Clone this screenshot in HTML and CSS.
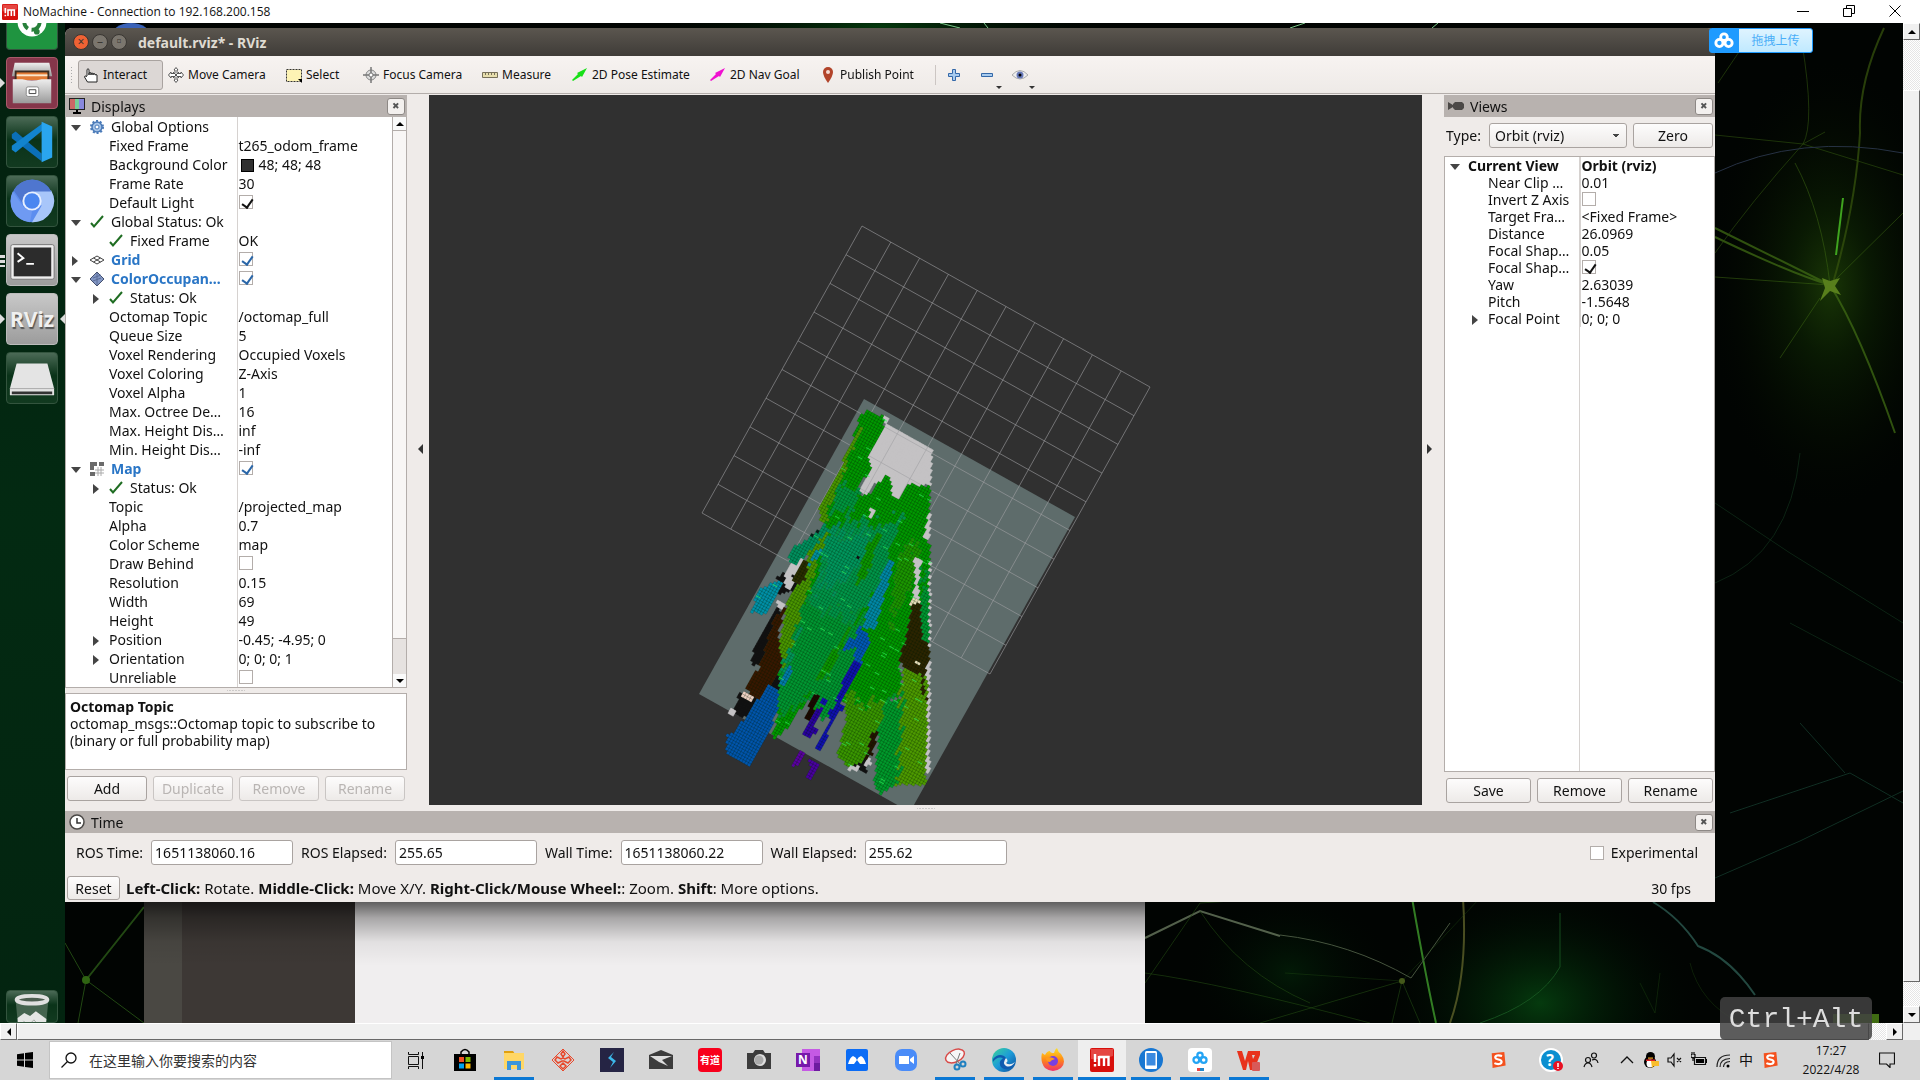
FILE: index.html
```html
<!DOCTYPE html>
<html lang="zh-CN">
<head>
    <meta charset="UTF-8">
    <meta name="viewport" content="width=device-width, initial-scale=1.0">
    <title>NoMachine - Connection to 192.168.200.158</title>
    <link rel="stylesheet" href="styles.css">
</head>
<body>
    <!-- Shared icons -->
    <svg class="defs" aria-hidden="true">
        <symbol id="i-check" viewBox="0 0 14 14"><path d="M1 8 4 11.500 13 1" fill="none" stroke="#1f6d22" stroke-width="2"/></symbol>
        <symbol id="i-nm" viewBox="0 0 24 24"><rect width="24" height="24" rx="2" fill="#d8100c"/><path d="M1 1h22v7q-11 4-22 3z" fill="#ef6a66" opacity=".6"/><path d="M5 6v8M5 16v2.500M9 18V8M9 9h9.500V18M14 9v9" fill="none" stroke="#fff" stroke-width="2.400"/></symbol>
        <symbol id="i-sogou" viewBox="0 0 20 20"><path d="M3 2.500 17 1l1.500 15L4 19Z" fill="#f4511e"/><path d="M14.500 5.500C10 4 6.500 5 7 7.500s7 1.500 7 4.500-5 3-8 1.500" fill="none" stroke="#fff" stroke-width="2.400"/></symbol>
        <symbol id="i-cloud" viewBox="0 0 24 20"><g fill="none" stroke-width="3.400"><circle cx="12" cy="6" r="4"/><circle cx="6.500" cy="13" r="4.300"/><circle cx="17.500" cy="13" r="4.300"/></g></symbol>
        <linearGradient id="g-metal" x2="0" y2="1"><stop stop-color="#eee"/><stop offset="1" stop-color="#9b9b9b"/></linearGradient>
        <linearGradient id="g-edge" x2="1" y2="1"><stop stop-color="#3bd59a"/><stop offset=".5" stop-color="#1c9bd8"/><stop offset="1" stop-color="#0c4a9c"/></linearGradient>
        <linearGradient id="g-fox" x2="0" y2="1"><stop stop-color="#ffe226"/><stop offset=".5" stop-color="#ff8a16"/><stop offset="1" stop-color="#f0306a"/></linearGradient>
    </svg>

    <header class="titlebar">
        <svg class="logo"><use href="#i-nm"/></svg>
        <span class="caption">NoMachine - Connection to 192.168.200.158</span>
        <button class="win-btn" aria-label="Minimize"><svg viewBox="0 0 12 12"><path d="M0 6.500h12"/></svg></button>
        <button class="win-btn" aria-label="Restore"><svg viewBox="0 0 12 12"><path d="M.5 3.500h8v8h-8zM3.500 3V.5h8v8H9"/></svg></button>
        <button class="win-btn" aria-label="Close"><svg viewBox="0 0 12 12"><path d="M.5.5l11 11M11.500.5l-11 11"/></svg></button>
    </header>

    <main class="remote">
        <div class="desktop">
            <svg class="wallpaper" viewBox="0 0 1903 1000" preserveAspectRatio="xMidYMid slice" aria-hidden="true">
                <defs>
                    <radialGradient id="glow"><stop stop-color="#234a08" stop-opacity=".7"/><stop offset=".3" stop-color="#0f2804" stop-opacity=".6"/><stop offset="1" stop-color="#000" stop-opacity="0"/></radialGradient>
                    <radialGradient id="glow2"><stop stop-color="#053a0e"/><stop offset="1" stop-color="#000" stop-opacity="0"/></radialGradient>
                </defs>
                <rect width="1903" height="1000" fill="#010402"/>
                <ellipse cx="1830" cy="262" rx="130" ry="240" fill="url(#glow)"/>
                <ellipse cx="1540" cy="980" rx="170" ry="130" fill="url(#glow2)"/>
                <ellipse cx="1290" cy="950" rx="110" ry="90" fill="url(#glow2)" opacity=".4"/>
                <ellipse cx="880" cy="3" rx="260" ry="30" fill="url(#glow2)"/>
                <g fill="none" stroke="#3f6a14" opacity=".75">
                    <path d="M1884 5Q1858 60 1860 110 1856 180 1833 260" stroke="#35520d" stroke-width="2"/>
                    <path d="M1715 205 1830 262M1715 214Q1790 250 1830 262 1860 310 1895 410" stroke-width="2"/>
                    <path d="M1715 254 1830 262M1830 262 1903 190M1830 262Q1822 190 1795 140M1820 275 1780 335" opacity=".7"/>
                    <path d="M1803 121Q1750 180 1715 230M1803 121Q1815 100 1802 20M1803 121 1825 109M1803 121 1903 152M1715 112 1803 121M1718 60 1745 20" opacity=".6"/>
                    <path d="M1715 150Q1800 110 1903 130" stroke="#33405a"/>
                    <path d="M1715 560Q1790 530 1800 430M1715 480 1790 530 1903 600M1790 600 1903 660" stroke="#1a4a2a" opacity=".6"/>
                </g>
                <path d="M1843 175 1836 232" stroke="#3fa41f" stroke-width="2"/>
                <path d="M1822 255 1830 258 1840 255 1835 263 1841 272 1830 268 1820 278 1825 265Z" fill="#587f1c"/>
                <g fill="none" stroke="#2b5a18" opacity=".8">
                    <path d="M1715 855 1800 818 1903 768M1730 790 1850 750 1903 780M1800 700 1845 750" stroke="#153a2c"/>
                    <path d="M1412 875Q1425 950 1436 1000" stroke="#3f9a2c" stroke-width="2"/>
                    <path d="M1463 875Q1468 950 1450 1000" stroke="#5d612a" stroke-width="2"/>
                    <path d="M1653 879Q1680 895 1698 923 1730 935 1755 972" stroke="#2c5a50" stroke-width="2"/>
                    <path d="M1480 1000Q1540 980 1560 944V890" stroke="#1b5b24"/>
                    <path d="M1280 912Q1350 920 1411 955L1450 900" stroke="#58684e"/>
                    <path d="M1145 915 1200 888 1280 913" stroke="#68785e" stroke-width="2"/>
                    <path d="M1145 950Q1220 960 1370 1000M1200 888Q1240 950 1310 980M1260 1000 1402 958M1402 958 1392 1000M1402 958 1420 1000M1145 960 1200 880 1280 875" opacity=".6"/>
                    <path d="M1285 950 1402 958 1480 875M1690 940Q1700 980 1740 1000M1640 960 1655 990 1660 950" opacity=".4"/>
                    <path d="M65 920 86 957 144 884M86 957 144 1000M86 957 78 1000"/>
                    <path d="M86 957 144 884" stroke-width="2"/>
                </g>
                <circle cx="86" cy="957" r="4" fill="#2f6412"/>
                <circle cx="1402" cy="958" r="3" fill="#44591a"/>
                <path d="M1290 5 1305 0M940 0 960 5M984 0 988 5M1432 5 1438 0" stroke="#7cc98a"/>
                <ellipse cx="131" cy="14" rx="20" ry="14" fill="#3a62b8"/>
                <rect x="1833" y="991" width="46" height="9" fill="#3f6b12"/>
            </svg>

            <div class="back-window"></div>

            <nav class="launcher">
                <a href="#" class="tile ubuntu" aria-label="Ubuntu"><svg viewBox="0 0 52 52"><circle cx="26" cy="24" r="15" fill="#fff"/><circle cx="26" cy="24" r="8" fill="none" stroke="#27803a" stroke-width="4" stroke-dasharray="13 4"/><circle cx="31" cy="34" r="3" fill="#27803a"/></svg></a>
                <a href="#" class="tile files run" aria-label="Files"><svg viewBox="0 0 52 52"><path d="M8 5h36l3 14H5z" fill="url(#g-metal)"/><path d="M8 13h36v9H8z" fill="#3a2c22"/><path d="M10 15h32v8H10z" fill="#e27a34"/><path d="M10 17h32v2H10z" fill="#fbe6cc"/><path d="M6 22h10q10 3 20 0h10v25H6z" fill="url(#g-metal)"/><rect x="20" y="30" width="13" height="10" rx="2" fill="#fff" stroke="#888"/><path d="M23 33h7v4h-7z" fill="none" stroke="#444"/></svg></a>
                <a href="#" class="tile" aria-label="Visual Studio Code"><svg viewBox="0 0 52 52"><path d="M5 18 9 15 36 38V46L5 22Z" fill="#0b6fb8"/><path d="M5 34 9 37 38 13V6L5 30Z" fill="#1284ce"/><path d="M36 5 47 10V42L36 47Z" fill="#2aa5ee"/></svg></a>
                <a href="#" class="tile" aria-label="Chromium"><svg viewBox="0 0 52 52"><circle cx="26" cy="26" r="22" fill="#5c8def"/><path d="M26 15H46A22 22 0 0 1 26 48L36 31Z" fill="#a8c6fa"/><path d="M6 16 17 32 26 37 24 48A22 22 0 0 1 6 16Z" fill="#6f9af2"/><path d="M7 15A22 22 0 0 1 46 16H26L16 28Z" fill="#4f76cf"/><circle cx="26" cy="26" r="10" fill="#e8f0ff"/><circle cx="26" cy="26" r="8" fill="#4a86f0"/></svg></a>
                <a href="#" class="tile metal run multi" aria-label="Terminal"><svg viewBox="0 0 52 52"><rect x="4" y="10" width="45" height="36" rx="2" fill="#eee" stroke="#777"/><rect x="7" y="13" width="39" height="30" fill="#2c2c2c"/><path d="M11 19 17 24 11 28M20 30h8" fill="none" stroke="#fff" stroke-width="2"/></svg></a>
                <a href="#" class="tile metal run focus" aria-label="RViz"><span class="rviz-text">RViz</span></a>
                <a href="#" class="tile" aria-label="Disk"><svg viewBox="0 0 52 52"><path d="M10 11h32l7 26v7H3v-7z" fill="#e4e4e4"/><path d="M3 37h46" stroke="#aaa"/><path d="M5 40h42v3H5z" fill="#333"/></svg></a>
                <a href="#" class="tile trash" aria-label="Trash"><svg viewBox="0 0 52 52"><path d="M9 10h34l-4 42H13z" fill="#54705c" opacity=".8"/><path d="M11 28 18 23 24 26 30 21 41 29 39 52H12Z" fill="#e4e6e4"/><path d="M17 31 22 36 28 30 35 38M15 42 23 46 32 42" stroke="#a4a9a5" fill="none"/><ellipse cx="26" cy="9" rx="16" ry="4" fill="#4c5e50" stroke="#e0e0e0" stroke-width="4"/></svg></a>
            </nav>

            <section class="rviz">
                <div class="rviz-title">
                    <button class="dot close" aria-label="Close">×</button>
                    <button class="dot" aria-label="Minimize">–</button>
                    <button class="dot" aria-label="Maximize">▫</button>
                    <h1>default.rviz* - RViz</h1>
                </div>

                <div class="toolbar">
                    <span class="grip"></span>
                    <button class="tool active"><svg viewBox="0 0 16 16"><path d="M4 9V2.500q1-1.500 2 0V8V6q1-1 2 0v2V6.500q1-1 2 0V8V7q1-1 2 0v1q1-1 2 0v7H4.500L1.500 10q0-2 2.500-.5" fill="#fff" stroke="#222"/></svg>Interact</button>
                    <button class="tool"><svg viewBox="0 0 16 16"><path d="M8 .5 10 3H9v3.500h4V5l2.500 3L13 11V9.500H9V13h1l-2 2.500L6 13h1V9.500H3V11L.5 8 3 5v1.500h4V3H6zM5 5l6 6M11 5l-6 6" fill="#fff" stroke="#555"/></svg>Move Camera</button>
                    <button class="tool"><svg viewBox="0 0 16 16"><path d="M.5 2.500h15v12H.5z" fill="#fdf3b4" stroke="#333" stroke-dasharray="2 1"/><path d="M12 12h4v4z"/></svg>Select</button>
                    <button class="tool"><svg viewBox="0 0 16 16"><circle cx="8" cy="8" r="5" fill="#ddd" stroke="#888"/><circle cx="8" cy="8" r="2" fill="#fff" stroke="#777"/><path d="M8 0v6M8 10v6M0 8h6M10 8h6" stroke="#777" stroke-width="1.500"/></svg>Focus Camera</button>
                    <button class="tool"><svg viewBox="0 0 16 16"><path d="M.5 5.500h15v5H.5z" fill="#e8dfae" stroke="#77705a"/><path d="M3.500 6v2M6.500 6v2M9.500 6v2M12.500 6v2" stroke="#77705a"/></svg>Measure</button>
                    <button class="tool"><svg viewBox="0 0 16 16"><path d="M0 13 6 7 5 6 15 1 10 10 9 9 1 14Z" fill="#18e018"/></svg>2D Pose Estimate</button>
                    <button class="tool"><svg viewBox="0 0 16 16"><path d="M0 13 6 7 5 6 15 1 10 10 9 9 1 14Z" fill="#f010d0"/></svg>2D Nav Goal</button>
                    <button class="tool"><svg viewBox="0 0 16 16"><path d="M8 16Q3 9 3 5a5 5 0 0 1 10 0q0 4-5 11" fill="#b2442a"/><circle cx="8" cy="5" r="2" fill="#f6dcd4"/></svg>Publish Point</button>
                    <span class="sep"></span>
                    <button class="mini" aria-label="Add tool"><svg viewBox="0 0 16 16"><path d="M6.500 2.500h3v4h4v3h-4v4h-3v-4h-4v-3h4z" fill="#a8cbee" stroke="#3468a8"/></svg></button>
                    <button class="mini menu" aria-label="Remove tool"><svg viewBox="0 0 16 16"><path d="M2.500 6.500h11v3h-11z" fill="#a8cbee" stroke="#3468a8"/></svg></button>
                    <button class="mini menu" aria-label="Show tools"><svg viewBox="0 0 16 16"><path d="M0 8q8-9 16 0-8 8-16 0" fill="#eee" stroke="#aaa"/><circle cx="8" cy="8" r="3.500" fill="#6678b8"/><circle cx="8" cy="8" r="1.500"/></svg></button>
                </div>

                <div class="workspace">
                    <aside class="displays">
                        <div class="dock-title">
                            <svg viewBox="0 0 16 16"><path d="M0 0h16v12H0z" fill="#222"/><path d="M1 1h5v10H1z" fill="#c66"/><path d="M6 1h4v10H6z" fill="#7c9"/><path d="M10 1h5v10h-5z" fill="#88d"/><path d="M7 12h2v2h3v2H4v-2h3z"/></svg>
                            <h2>Displays</h2>
                            <button class="dock-close" aria-label="Close Displays">✖</button>
                        </div>
                        <div class="tree-box">
                            <table class="tree">
                                <tr><th class="top"><i class="open"></i><svg viewBox="0 0 14 14"><circle cx="7" cy="7" r="5" fill="#a6c4e8" stroke="#4a7ab8" stroke-width="1.500"/><circle cx="7" cy="7" r="6" fill="none" stroke="#4a7ab8" stroke-width="2" stroke-dasharray="2 1.800"/><circle cx="7" cy="7" r="2" fill="#fff" stroke="#4a7ab8"/></svg>Global Options</th><td></td></tr>
                                <tr><th>Fixed Frame</th><td>t265_odom_frame</td></tr>
                                <tr><th>Background Color</th><td><span class="swatch"></span>48; 48; 48</td></tr>
                                <tr><th>Frame Rate</th><td>30</td></tr>
                                <tr><th>Default Light</th><td><input type="checkbox" aria-label="Default Light" checked></td></tr>
                                <tr><th class="top"><i class="open"></i><svg><use href="#i-check"/></svg>Global Status: Ok</th><td></td></tr>
                                <tr><th><svg><use href="#i-check"/></svg>Fixed Frame</th><td>OK</td></tr>
                                <tr><th class="top name"><i></i><svg viewBox="0 0 14 14"><path d="M0 7 7 3 14 7 7 11ZM3.500 5 10.500 9M10.500 5 3.500 9" fill="none" stroke="#444"/></svg>Grid</th><td><input type="checkbox" class="blue" aria-label="Grid" checked></td></tr>
                                <tr><th class="top name"><i class="open"></i><svg viewBox="0 0 14 14"><path d="M7 0 14 7 7 14 0 7Z" fill="#8397c4" stroke="#44506e"/><path d="M7 1v12M3 6l8-3M3 9l8-3" stroke="#5a6c98"/></svg>ColorOccupan…</th><td><input type="checkbox" class="blue" aria-label="ColorOccupancyGrid" checked></td></tr>
                                <tr><th class="sub"><i></i><svg><use href="#i-check"/></svg>Status: Ok</th><td></td></tr>
                                <tr><th>Octomap Topic</th><td>/octomap_full</td></tr>
                                <tr><th>Queue Size</th><td>5</td></tr>
                                <tr><th>Voxel Rendering</th><td>Occupied Voxels</td></tr>
                                <tr><th>Voxel Coloring</th><td>Z-Axis</td></tr>
                                <tr><th>Voxel Alpha</th><td>1</td></tr>
                                <tr><th>Max. Octree De…</th><td>16</td></tr>
                                <tr><th>Max. Height Dis…</th><td>inf</td></tr>
                                <tr><th>Min. Height Dis…</th><td>-inf</td></tr>
                                <tr><th class="top name"><i class="open"></i><svg viewBox="0 0 14 14"><path d="M0 0h7v4H4v4H0zM9 0h5v4H9zM0 10h5v4H0z" fill="#6b6b6b"/><path d="M5 8h9M8 5v9M11 5v9M5 11h9" stroke="#aaa"/></svg>Map</th><td><input type="checkbox" class="blue" aria-label="Map" checked></td></tr>
                                <tr><th class="sub"><i></i><svg><use href="#i-check"/></svg>Status: Ok</th><td></td></tr>
                                <tr><th>Topic</th><td>/projected_map</td></tr>
                                <tr><th>Alpha</th><td>0.7</td></tr>
                                <tr><th>Color Scheme</th><td>map</td></tr>
                                <tr><th>Draw Behind</th><td><input type="checkbox" aria-label="Draw Behind"></td></tr>
                                <tr><th>Resolution</th><td>0.15</td></tr>
                                <tr><th>Width</th><td>69</td></tr>
                                <tr><th>Height</th><td>49</td></tr>
                                <tr><th class="sub"><i></i>Position</th><td>-0.45; -4.95; 0</td></tr>
                                <tr><th class="sub"><i></i>Orientation</th><td>0; 0; 0; 1</td></tr>
                                <tr><th>Unreliable</th><td><input type="checkbox" aria-label="Unreliable"></td></tr>
                            </table>
                            <div class="qt-scroll"><b class="up"></b><span></span><b class="down"></b></div>
                        </div>
                        <div class="h-grip"></div>
                        <div class="help"><strong>Octomap Topic</strong><br>octomap_msgs::Octomap topic to subscribe to (binary or full probability map)</div>
                        <div class="btn-row">
                            <button class="qt-btn">Add</button>
                            <button class="qt-btn" disabled>Duplicate</button>
                            <button class="qt-btn" disabled>Remove</button>
                            <button class="qt-btn" disabled>Rename</button>
                        </div>
                    </aside>

                    <div class="splitter"><i class="left"></i></div>

                    <div class="center">
                        <svg id="scene" viewBox="0 0 993 710" preserveAspectRatio="xMidYMid slice">
                            <path d="M435 304 646 422 481 717 270 599Z" fill="#5e6c6b"/>
                            <g id="floor"></g>
                            <path id="grid" fill="none" stroke="#a0a0a4" stroke-opacity=".6"/>
                            <g id="voxels"></g>
                        </svg>
                        <div class="h-grip"></div>
                    </div>

                    <div class="splitter"><i class="right"></i></div>

                    <aside class="views">
                        <div class="dock-title">
                            <svg viewBox="0 0 16 16"><path d="M0 4 5 7V9L0 12ZM7 4h7l2 2v4l-2 2H7L5 10V6z" fill="#4b4846"/></svg>
                            <h2>Views</h2>
                            <button class="dock-close" aria-label="Close Views">✖</button>
                        </div>
                        <div class="type-row">
                            <label for="type">Type:</label>
                            <select id="type"><option>Orbit (rviz)</option></select>
                            <button class="qt-btn">Zero</button>
                        </div>
                        <div class="tree-box">
                            <table class="tree tight">
                                <tr><th class="top cur"><i class="open"></i>Current View</th><td class="cur">Orbit (rviz)</td></tr>
                                <tr><th>Near Clip …</th><td>0.01</td></tr>
                                <tr><th>Invert Z Axis</th><td><input type="checkbox" aria-label="Invert Z Axis"></td></tr>
                                <tr><th>Target Fra…</th><td>&lt;Fixed Frame&gt;</td></tr>
                                <tr><th>Distance</th><td>26.0969</td></tr>
                                <tr><th>Focal Shap…</th><td>0.05</td></tr>
                                <tr><th>Focal Shap…</th><td><input type="checkbox" aria-label="Focal Shape Fixed Size" checked></td></tr>
                                <tr><th>Yaw</th><td>2.63039</td></tr>
                                <tr><th>Pitch</th><td>-1.5648</td></tr>
                                <tr><th class="sub"><i></i>Focal Point</th><td>0; 0; 0</td></tr>
                            </table>
                        </div>
                        <div class="btn-row">
                            <button class="qt-btn">Save</button>
                            <button class="qt-btn">Remove</button>
                            <button class="qt-btn">Rename</button>
                        </div>
                    </aside>
                </div>

                <div class="dock-title">
                    <svg viewBox="0 0 16 16"><circle cx="8" cy="8" r="7" fill="#fff" stroke="#4b4846" stroke-width="1.500"/><path d="M8 4v5h4" fill="none" stroke="#333" stroke-width="1.500"/></svg>
                    <h2>Time</h2>
                    <button class="dock-close" aria-label="Close Time">✖</button>
                </div>
                <div class="time-row">
                    <label for="rt">ROS Time:</label><input id="rt" type="text" value="1651138060.16">
                    <label for="re">ROS Elapsed:</label><input id="re" type="text" value="255.65">
                    <label for="wt">Wall Time:</label><input id="wt" type="text" value="1651138060.22">
                    <label for="we">Wall Elapsed:</label><input id="we" type="text" value="255.62">
                    <label class="exp"><input type="checkbox">Experimental</label>
                </div>
                <div class="status">
                    <button class="qt-btn">Reset</button>
                    <p><b>Left-Click:</b> Rotate. <b>Middle-Click:</b> Move X/Y. <b>Right-Click/Mouse Wheel:</b>: Zoom. <b>Shift</b>: More options.</p>
                    <span>30 fps</span>
                </div>
            </section>

            <button class="upload"><svg><use href="#i-cloud" stroke="#fff"/></svg><span>拖拽上传</span></button>
        </div>

        <div class="vbar"><b class="up"></b><span></span><b class="down"></b></div>
        <div class="hbar"><b class="left"></b><span></span><b class="right"></b></div>
        <div class="corner"></div>
        <div class="keys">Ctrl+Alt</div>
    </main>

    <footer class="taskbar">
        <button class="start" aria-label="Start"><svg viewBox="0 0 16 16"><path d="M0 2.200 7 1.200V7.500H0ZM8 1 16 0V7.500H8ZM0 8.500H7V14.800L0 13.800ZM8 8.500H16V16L8 15Z"/></svg></button>
        <label class="search">
            <svg viewBox="0 0 16 16"><circle cx="10" cy="6" r="5" fill="none" stroke="#111" stroke-width="1.300"/><path d="M6.500 9.500.5 15.500" stroke="#111" stroke-width="1.300"/></svg>
            <input type="text" placeholder="在这里输入你要搜索的内容" aria-label="搜索">
        </label>
        <nav class="apps">
            <a href="#" aria-label="任务视图"><svg viewBox="0 0 24 24"><path d="M4.500 8.500h10v8h-10zM4.500 4v2.500h10V4M4.500 21v-2.500h10V21M18.500 4v17" fill="none" stroke="#111"/><path d="M17 8h3v3h-3z"/></svg></a>
            <a href="#" aria-label="Store"><svg viewBox="0 0 24 24"><path d="M8 7V4q4-5 8 0v3" fill="none" stroke="#000" stroke-width="1.500"/><path d="M1 6h22v17H1z"/><path d="M6 9h5v5H6z" fill="#f25022"/><path d="M12.500 9h5v5h-5z" fill="#7fba00"/><path d="M6 15.500h5v5H6z" fill="#00a4ef"/><path d="M12.500 15.500h5v5h-5z" fill="#ffb900"/></svg></a>
            <a href="#" class="on" aria-label="Explorer"><svg viewBox="0 0 24 24"><path d="M2 3h9l2 3H2z" fill="#e0a010"/><path d="M2 5h20v16H2z" fill="#ffd766"/><path d="M5 13h14v9h-4v-5H9v5H5z" fill="#3c96dc"/></svg></a>
            <a href="#" aria-label="Diamond"><svg viewBox="0 0 24 24"><path d="M12 1 23 12 12 23 1 12Z" fill="none" stroke="#e8492c"/><path d="M12 3 14 6 12 9 10 6ZM6 9 10 11 12 10 14 11 18 9 20 12 17 15 13 13H11L7 15 4 12ZM12 15 15 18 12 21 9 18Z" fill="none" stroke="#e8492c" stroke-width="1.500"/></svg></a>
            <a href="#" aria-label="Steps"><svg viewBox="0 0 24 24"><path d="M0 0h24v24H0z" fill="#252444"/><path d="M14 4 8 10 13 14 10 20 16 13 11 9Z" fill="#3cb8ea"/></svg></a>
            <a href="#" aria-label="Mail"><svg viewBox="0 0 24 24"><path d="M0 7 12 2 24 7V21H0Z" fill="#3c3c3c"/><path d="M1 8h22L13 12 19 18 10 14Z" fill="#ddd"/></svg></a>
            <a href="#" class="youdao" aria-label="有道"><span>有道</span></a>
            <a href="#" aria-label="Camera"><svg viewBox="0 0 24 24"><path d="M0 5h6l2-3h8l2 3h6v16H0z" fill="#3c3c3c"/><circle cx="13" cy="12" r="6" fill="#ddd"/><circle cx="12" cy="12" r="4.500" fill="#aaa"/></svg></a>
            <a href="#" aria-label="OneNote"><svg viewBox="0 0 24 24"><path d="M6 1h18v22H6z" fill="#c55ae4"/><path d="M18 8h6v7h-6z" fill="#9332bf"/><path d="M18 15h6v8h-6z" fill="#6d1ba0"/><path d="M0 5h14v14H0z" fill="#7719aa"/><text x="7" y="16" class="letter">N</text></svg></a>
            <a href="#" aria-label="Meeting"><svg viewBox="0 0 24 24"><rect x="1" y="1" width="22" height="22" rx="2" fill="#0b6cf5"/><path d="M3 16Q5 9 8 8 11 9 12 12 13 9 16 8 19 9 21 16H15L12 12 9 16Z" fill="#fff"/></svg></a>
            <a href="#" aria-label="Video"><svg viewBox="0 0 24 24"><rect x="1" y="1" width="22" height="22" rx="7" fill="#4a8cf8"/><path d="M5 8h10v8H5zM16 11 20 8V16L16 13Z" fill="#fff"/></svg></a>
            <a href="#" class="on" aria-label="Snip"><svg viewBox="0 0 24 24"><ellipse cx="12" cy="8" rx="10" ry="6" transform="rotate(-25 12 8)" fill="#f6f6f6" stroke="#d84a48" stroke-width="1.500"/><path d="M7 5 18 17M17 5 13 16" stroke="#777"/><circle cx="14" cy="19" r="2.500" fill="none" stroke="#2080c0" stroke-width="2"/><circle cx="20" cy="16" r="2.500" fill="none" stroke="#2080c0" stroke-width="2"/></svg></a>
            <a href="#" class="on" aria-label="Edge"><svg viewBox="0 0 24 24"><circle cx="12" cy="12" r="12" fill="url(#g-edge)"/><path d="M1 11Q6 5 12 8 16 11 14 14 18 18 23 15 18 24 10 20 5 15 11 10 5 8 1 14" fill="#0f5bb0"/><path d="M14 10Q17 13 14 15 18 18 23 14 19 20 14 18 10 15 14 10" fill="#e8eef2"/></svg></a>
            <a href="#" class="on" aria-label="Firefox"><svg viewBox="0 0 24 24"><path d="M1 5 4 7Q6 3 9 3 9 5 13 5 14 1 16 0 17 4 20 6 26 14 20 20 12 26 4 20-1 14 1 5" fill="url(#g-fox)"/><circle cx="12" cy="13" r="5" fill="#7a3fe0"/><path d="M5 10Q10 8 14 11 10 12 9 14 5 14 5 10" fill="#ff9a1c"/></svg></a>
            <a href="#" class="on current" aria-label="NoMachine"><svg><use href="#i-nm"/></svg></a>
            <a href="#" class="on" aria-label="Phone"><svg viewBox="0 0 24 24"><circle cx="12" cy="12" r="12" fill="#1877d2"/><rect x="6" y="3" width="12" height="18" rx="1.500" fill="#fff"/><path d="M7.500 5h9v12.500h-9z" fill="#3a8ae0"/></svg></a>
            <a href="#" class="on" aria-label="Baidu"><svg viewBox="0 0 24 24"><rect width="24" height="24" rx="4" fill="#fff"/><use href="#i-cloud" x="4" y="3" width="16" height="14" stroke="#24a4f4"/><path d="M9 20h3v3H9z" fill="#e44"/><path d="M12 20h4v3h-4z" fill="#28c"/></svg></a>
            <a href="#" class="on" aria-label="WPS"><svg viewBox="0 0 24 24"><path d="M0 3h5l3 10 3-10h3l2 8 2-4h-3l-1-4h9v4L17 22h-4l-2-9-2 9H6z" fill="#e8321c"/><rect x="15" y="14" width="8" height="9" rx="1" fill="#d85a58"/></svg></a>
        </nav>
        <div class="tray">
            <svg class="t-sogou"><use href="#i-sogou"/></svg>
            <svg class="t-help" viewBox="0 0 24 24"><circle cx="12" cy="12" r="11" fill="#0b8fd0" stroke="#fff" stroke-width="2"/><text x="11" y="18" class="letter big">?</text><circle cx="19" cy="18" r="5" fill="#e81123"/><path d="M19 15v4M19 20v1" stroke="#fff" stroke-width="1.500"/></svg>
            <svg class="t-people" viewBox="0 0 16 16"><g fill="none" stroke="#111" stroke-width="1.200"><circle cx="11" cy="3.500" r="2.500"/><circle cx="5" cy="8" r="2.500"/><path d="M1 15q1-4 4-4t4 4M9 8q5-2 6 3"/></g></svg>
            <svg viewBox="0 0 16 16"><path d="M2 11 8 5 14 11" fill="none" stroke="#111" stroke-width="1.300"/></svg>
            <svg viewBox="0 0 16 16"><ellipse cx="7" cy="10" rx="6" ry="6"/><circle cx="7.500" cy="4.500" r="4.500"/><ellipse cx="7" cy="11.500" rx="3.500" ry="4" fill="#fff"/><path d="M3 7.500h9V9H3z" fill="#e02020"/><path d="M5 5.500h5v1.200H5z" fill="#f5a623"/><path d="M8 9h8v5h-5l-2 2z" fill="#f9bd2c"/></svg>
            <svg viewBox="0 0 16 16"><path d="M1 6h3l3-4v12l-3-4H1zM10 6l4 4M14 6l-4 4" fill="none" stroke="#111" stroke-width="1.200"/></svg>
            <svg viewBox="0 0 16 16"><path d="M3.500 5.500h11v7h-11zM0 2v3q2 2 4 0V2M1 0v3M3 0v3M2 5v4" fill="none" stroke="#111" stroke-width="1.200"/><path d="M5 7h8v4H5zM15 7h1v4h-1z"/></svg>
            <svg viewBox="0 0 16 16"><g fill="none" stroke="#222" stroke-width="1.200"><path d="M2 15Q2 3 15 3M5 15Q5 7 15 6.500M8.500 15q0-5 6.500-5.500"/></g><circle cx="13" cy="14" r="1.500"/></svg>
            <span class="ime">中</span>
            <svg class="t-sogou"><use href="#i-sogou"/></svg>
            <time>17:27<br>2022/4/28</time>
            <svg class="t-note" viewBox="0 0 16 16"><path d="M.5 1h15v11H11v3.500L7.500 12H.5z" fill="none" stroke="#111" stroke-width="1.200"/></svg>
        </div>
    </footer>

    <script src="scene.js"></script>
</body>
</html>
```

FILE: styles.css
```css
* {
    box-sizing: border-box;
}
body {
    margin: 0;
    height: 100vh;
    display: flex;
    flex-direction: column;
    overflow: hidden;
    font-family: "Noto Sans", "Noto Sans CJK SC", sans-serif;
    font-size: 14px;
    color: #111;
}
button, input, select {
    font: inherit;
    color: inherit;
}
button {
    padding: 0;
    border: 0;
    background: none;
}
h1, h2, p {
    margin: 0;
}
.defs {
    position: absolute;
    width: 0;
    height: 0;
}

/* Client window */
.titlebar {
    flex: none;
    height: 23px;
    display: flex;
    align-items: center;
    padding-right: 2px;
    background: #fff;
}
.logo {
    width: 16px;
    height: 16px;
    margin: 0 5px 0 2px;
}
.caption {
    flex: 1;
    font-family: "Open Sans", sans-serif;
    font-size: 12px;
    line-height: 20px;
}
.win-btn {
    width: 46px;
    height: 20px;
}
.win-btn svg {
    width: 12px;
    height: 12px;
    fill: none;
    stroke: #000;
}
.remote {
    flex: 1;
    min-height: 0;
    display: grid;
    grid-template-columns: 1fr 17px;
    grid-template-rows: 1fr 17px;
    position: relative;
}
.desktop {
    position: relative;
    overflow: hidden;
    background: #020503;
}
.wallpaper {
    position: absolute;
    width: 100%;
    height: 100%;
}

/* Old style scrollbars */
.vbar, .hbar {
    display: flex;
    background: repeating-conic-gradient(#fff 0 25%, #e6e6e6 0 50%) 0 0 / 2px 2px;
}
.vbar {
    flex-direction: column;
}
.vbar b, .hbar b {
    flex: none;
    width: 17px;
    height: 17px;
    display: grid;
    place-items: center;
}
.vbar b, .vbar span, .hbar b, .hbar span {
    background: #f0f0f0;
    border: 1px solid #fff;
    border-right-color: #696969;
    border-bottom-color: #696969;
}
.vbar span {
    flex: 1;
    margin: 50px 0 24px;
}
.hbar span {
    flex: 1;
    margin-right: 17px;
}
.corner {
    background: #f0f0f0;
}
b.up::after, b.down::after, b.left::after, b.right::after {
    content: "";
    border: 4px solid transparent;
}
b.up::after {
    border-top: 0;
    border-bottom-color: #000;
}
b.down::after {
    border-bottom: 0;
    border-top-color: #000;
}
b.left::after {
    border-left: 0;
    border-right-color: #000;
}
b.right::after {
    border-right: 0;
    border-left-color: #000;
}
.keys {
    position: absolute;
    right: 48px;
    bottom: 0;
    width: 152px;
    height: 43px;
    border-radius: 5px;
    background: rgba(66, 66, 66, .85);
    color: #ddd;
    font-family: "Liberation Mono", monospace;
    font-size: 28px;
    line-height: 46px;
    text-align: center;
}

/* Launcher */
.launcher {
    position: absolute;
    inset: 0 auto 0 0;
    width: 65px;
    display: flex;
    flex-direction: column;
    gap: 7px;
    padding-left: 6px;
    background: linear-gradient(#03200f, #032a12 50%, #032410);
}
.launcher a {
    text-decoration: none;
}
.tile {
    position: relative;
    flex: none;
    width: 52px;
    height: 52px;
    border: 1px solid #33543e;
    border-radius: 4px;
    background: linear-gradient(#4b6a56, #0a3319 45%, #123a20);
}
.tile svg {
    display: block;
    width: 50px;
    height: 50px;
}
.ubuntu {
    height: 27px;
    border-top: 0;
    border-radius: 0 0 4px 4px;
    overflow: hidden;
    display: flex;
    align-items: flex-end;
    background: #1f9440;
}
.ubuntu svg {
    flex: none;
}
.files {
    background: #85364a;
    border-color: #a85a6a;
}
.metal {
    background: linear-gradient(#c8c8c8, #9c9c9c);
    border-color: #bbb;
}
.trash {
    height: 33px;
    margin-top: auto;
    overflow: hidden;
}
.run::before, .focus::after {
    content: "";
    position: absolute;
    top: 20px;
    left: -7px;
    border: 5px solid transparent;
    border-right: 0;
    border-left-color: #ddd;
}
.multi::before {
    border: 0;
    width: 5px;
    height: 12px;
    background: repeating-linear-gradient(#ddd 0 3px, transparent 3px 5px);
}
.focus::after {
    left: 53px;
    border: 5px solid transparent;
    border-left: 0;
    border-right-color: #ddd;
}
.rviz-text {
    display: block;
    font-size: 21px;
    font-weight: bold;
    line-height: 50px;
    text-align: center;
    color: #f0f0f0;
    text-shadow: 1px 2px 1px #555;
}

/* Window behind RViz, with the shadow that falls on it */
.back-window {
    position: absolute;
    left: 144px;
    right: 758px;
    top: 200px;
    bottom: 0;
    background: linear-gradient(90deg, #4a4843 38px, #3d3835 38px 211px, #f0eeef 211px);
}
.back-window::after {
    content: "";
    position: absolute;
    inset: auto 0 0 0;
    height: 121px;
    background: linear-gradient(rgba(0, 0, 0, .6), rgba(0, 0, 0, .3) 16px, rgba(0, 0, 0, .06) 40px, transparent 64px);
}

/* RViz window */
.rviz {
    position: absolute;
    top: 5px;
    left: 65px;
    right: 188px;
    bottom: 121px;
    display: flex;
    flex-direction: column;
    background: #efebe9;
    border-radius: 7px 7px 0 0;
    overflow: hidden;
}
.rviz-title {
    flex: none;
    height: 28px;
    display: flex;
    align-items: center;
    gap: 3px;
    padding-left: 8px;
    background: linear-gradient(#5b564f, #3f3c38);
    color: #dfdbd2;
}
.rviz-title h1 {
    margin-left: 8px;
    font-size: 14px;
}
.dot {
    width: 16px;
    height: 16px;
    border: 1px solid #3a3733;
    border-radius: 50%;
    background: #7b766e;
    color: #3a3733;
    font-size: 12px;
    line-height: 12px;
}
.dot.close {
    background: #ef6234;
}
.toolbar {
    flex: none;
    height: 38px;
    display: grid;
    grid-template-columns: 13px 86px 118px 77px 119px 90px 138px 110px 119px 1px 33px 33px 33px;
    align-items: center;
    background: linear-gradient(#f7f3f1, #eeeae7);
    border-bottom: 1px solid #b3adaa;
    margin-bottom: 1px;
    font-size: 12px;
}
.grip {
    width: 4px;
    height: 18px;
    margin-left: 5px;
    background: radial-gradient(#aaa 1px, transparent 1px) 0 0 / 3px 3px;
}
.tool {
    display: flex;
    align-items: center;
    gap: 4px;
    height: 30px;
    padding-left: 4px;
    white-space: nowrap;
}
.tool svg, .mini svg {
    flex: none;
    width: 16px;
    height: 16px;
}
.tool.active {
    margin-right: 1px;
    border: 1px solid #a9a3a0;
    border-radius: 3px;
    background: #dcd7d5;
}
.sep {
    height: 20px;
    background: #ccc6c3;
}
.mini {
    position: relative;
    height: 20px;
    padding-left: 10px;
}
.mini svg {
    display: block;
}
.menu::after {
    content: "";
    position: absolute;
    right: 0;
    bottom: -4px;
    border: 3px solid transparent;
    border-bottom: 0;
    border-top-color: #333;
}

.workspace {
    flex: 1;
    min-height: 0;
    display: flex;
}
.displays {
    width: 342px;
    display: flex;
    flex-direction: column;
}
.views {
    width: 271px;
    display: flex;
    flex-direction: column;
}
.center {
    flex: 1;
    min-width: 0;
    display: flex;
    flex-direction: column;
}
#scene {
    flex: 1;
    min-height: 0;
    background: #303030;
}
.splitter {
    width: 22px;
    display: flex;
    align-items: center;
    justify-content: flex-end;
    padding: 0 6px 8px;
}
.splitter i {
    border: 5px solid transparent;
}
.splitter .left {
    border-left: 0;
    border-right-color: #333;
}
.splitter .right {
    border-right: 0;
    border-left-color: #333;
    margin-right: 6px;
}
.h-grip {
    flex: none;
    width: 18px;
    height: 6px;
    margin: 0 auto;
    background: radial-gradient(#aaa 1px, transparent 1px) center / 3px 3px repeat-x;
}
.displays .h-grip {
    height: 5px;
}
.dock-title {
    flex: none;
    height: 22px;
    display: flex;
    align-items: center;
    gap: 6px;
    padding: 0 2px 0 4px;
    background: #b8b2af;
}
.dock-title svg {
    width: 16px;
    height: 16px;
}
.dock-title h2 {
    flex: 1;
    font-size: 14px;
    font-weight: normal;
}
.dock-close {
    width: 18px;
    height: 17px;
    border: 1px solid #8d8885;
    border-radius: 3px;
    background: #f3f0ee;
    color: #555;
    font-size: 9px;
    line-height: 12px;
}
.tree-box {
    flex: 1;
    min-height: 0;
    display: flex;
    align-items: flex-start;
    border: 1px solid #b3adaa;
    background: #fff;
    overflow: hidden;
}
.displays .tree-box {
    border-top: 0;
}
.views .tree-box {
    background: linear-gradient(#d6d2d0, #d6d2d0) 134px 0 / 1px 100% no-repeat, #fff;
}
.tree {
    flex: 1;
    border-collapse: collapse;
    table-layout: fixed;
}
.tree th, .tree td {
    height: 19px;
    padding: 0;
    line-height: 18px;
    font-weight: normal;
    text-align: left;
    white-space: nowrap;
    vertical-align: middle;
}
.tree th {
    width: 171px;
    padding-left: 43px;
    border-right: 1px solid #d6d2d0;
}
.tree td {
    padding-left: 1px;
}
.tree th svg {
    width: 14px;
    height: 14px;
    margin-right: 7px;
    vertical-align: -2px;
}
.tree th i {
    display: inline-block;
    border: 5px solid transparent;
    border-right: 0;
    border-left: 6px solid #444;
    margin-right: 12px;
    vertical-align: -1px;
}
.tree th i.open {
    border: 5px solid transparent;
    border-bottom: 0;
    border-top: 6px solid #444;
    margin-right: 9px;
    vertical-align: 1px;
}
.tree .top {
    padding-left: 5px;
}
.tree .top i {
    margin-left: 1px;
}
.tree .top i.open {
    margin-left: 0;
}
.tree .sub {
    padding-left: 27px;
}
.tree .sub i {
    margin-right: 10px;
}
.tree .name {
    color: #2a76c6;
    font-weight: bold;
}
.tree .cur {
    font-weight: bold;
}
.tree.tight th, .tree.tight td {
    height: 17px;
    line-height: 17px;
}
.tree.tight th {
    width: 135px;
}
.tree.tight .top i {
    margin-right: 8px;
}
.swatch {
    display: inline-block;
    width: 13px;
    height: 13px;
    margin: 0 5px 0 2px;
    border: 1px solid #000;
    background: #303030;
    vertical-align: -2px;
}
input[type="checkbox"] {
    appearance: none;
    position: relative;
    width: 14px;
    height: 14px;
    margin: 0;
    border: 1px solid #b3adaa;
    background: #fff;
    vertical-align: -1px;
}
input[type="checkbox"]:checked::after {
    content: "";
    position: absolute;
    left: 4px;
    top: 1px;
    width: 5px;
    height: 9px;
    border: solid #111;
    border-width: 0 2px 2px 0;
    transform: rotate(35deg);
}
input.blue:checked::after {
    border-color: #2a66a8;
}
.qt-scroll {
    align-self: stretch;
    width: 14px;
    display: flex;
    flex-direction: column;
    border-left: 1px solid #b3adaa;
    background: #e6e2e0;
}
.qt-scroll b {
    height: 13px;
    display: grid;
    place-items: center;
    background: #fafafa;
}
.qt-scroll span {
    flex: 1;
    margin-bottom: 35px;
    border: solid #b3adaa;
    border-width: 1px 0;
    background: #f8f6f5;
}
.help {
    flex: none;
    height: 77px;
    padding: 4px;
    border: 1px solid #b3adaa;
    background: #fff;
    line-height: 17px;
}
.btn-row {
    flex: none;
    display: flex;
    gap: 6px;
    padding: 6px 2px 10px;
}
.views .btn-row {
    padding-bottom: 8px;
}
.qt-btn {
    flex: 1;
    height: 25px;
    border: 1px solid #a9a3a0;
    border-radius: 3px;
    background: linear-gradient(#fdfcfc, #edeae8);
    text-align: center;
}
.qt-btn:disabled {
    color: #b9b5b3;
    border-color: #c9c5c3;
}
.type-row {
    flex: none;
    display: flex;
    align-items: center;
    gap: 6px;
    padding: 6px 2px 8px;
}
.type-row label {
    width: 37px;
}
.type-row select {
    appearance: none;
    width: 138px;
    height: 25px;
    padding: 0 5px;
    border: 1px solid #a9a3a0;
    border-radius: 3px;
    background:
        linear-gradient(45deg, transparent 50%, #444 50%) 122px 10px / 4px 4px no-repeat,
        linear-gradient(-45deg, transparent 50%, #444 50%) 126px 10px / 4px 4px no-repeat,
        linear-gradient(#fdfcfc, #edeae8);
    background:
        linear-gradient(to top right, transparent 50%, #444 50%) 122px 10px / 4px 4px no-repeat,
        linear-gradient(to top left, transparent 50%, #444 50%) 126px 10px / 4px 4px no-repeat,
        linear-gradient(#fdfcfc, #edeae8);
}
.time-row {
    flex: none;
    display: flex;
    align-items: center;
    gap: 8px;
    padding: 7px 17px 0 11px;
}
.time-row input[type="text"] {
    width: 142px;
    height: 25px;
    padding: 0 3px;
    border: 1px solid #a9a3a0;
    border-radius: 3px;
    background: #fff;
}
.exp {
    margin-left: auto;
    display: flex;
    align-items: center;
    gap: 7px;
}
.status {
    flex: none;
    display: flex;
    align-items: center;
    gap: 6px;
    padding: 11px 24px 2px 2px;
}
.status .qt-btn {
    flex: none;
    width: 53px;
    height: 24px;
}
.status p {
    flex: 1;
    font-size: 15px;
    line-height: 20px;
}

.upload {
    position: absolute;
    top: 5px;
    right: 90px;
    width: 104px;
    height: 25px;
    display: flex;
    align-items: center;
    border: 1px solid #1f9bff;
    border-radius: 3px;
    background: #1f9bff;
    overflow: hidden;
}
.upload svg {
    width: 20px;
    height: 17px;
    margin: 0 5px 0 4px;
}
.upload span {
    flex: 1;
    line-height: 23px;
    font-size: 12px;
    background: linear-gradient(#dff4ff, #c0e9ff);
    color: #4aaef8;
    text-align: center;
}

/* Windows taskbar */
.taskbar {
    flex: none;
    height: 40px;
    display: flex;
    align-items: center;
    background: #d6d6d6;
}
.start {
    flex: none;
    width: 49px;
    padding-top: 4px;
}
.start svg {
    width: 16px;
    height: 16px;
}
.search {
    flex: none;
    display: flex;
    align-items: center;
    gap: 12px;
    width: 343px;
    height: 38px;
    padding-left: 11px;
    border: 1px solid #c4c4c4;
    background: #fff;
}
.search svg {
    width: 16px;
    height: 16px;
}
.search input {
    flex: 1;
    border: 0;
    padding: 0;
    outline: 0;
    background: none;
    font-family: "Noto Sans CJK SC", sans-serif;
}
.search input::placeholder {
    color: #333;
    opacity: 1;
}
.apps {
    flex: none;
    display: flex;
    gap: 1px;
    height: 40px;
}
.apps a {
    width: 48px;
    height: 40px;
    display: grid;
    place-items: center;
    border-bottom: 3px solid transparent;
    padding-top: 3px;
    text-decoration: none;
}
.apps svg {
    width: 24px;
    height: 24px;
}
.apps .on {
    background: linear-gradient(#0b78d4, #0b78d4) center bottom / 40px 3px no-repeat border-box;
}
.apps .current {
    background: linear-gradient(#0b78d4, #0b78d4) center bottom / 48px 3px no-repeat border-box, #eee;
}
.youdao span {
    width: 24px;
    border-radius: 4px;
    background: #f8001c;
    color: #fff;
    font-size: 10px;
    font-weight: bold;
    line-height: 24px;
    text-align: center;
}
.letter {
    fill: #fff;
    font-size: 12px;
    font-weight: bold;
    text-anchor: middle;
}
.letter.big {
    font-size: 16px;
}
.tray {
    flex: 1;
    display: flex;
    align-items: center;
    justify-content: flex-end;
    gap: 8px;
    padding-right: 25px;
}
.tray svg {
    width: 16px;
    height: 16px;
}
.tray .t-sogou {
    width: 18px;
    height: 18px;
}
.tray .t-help {
    width: 24px;
    height: 24px;
    margin: 0 12px 0 24px;
}
.tray .t-people {
    margin-right: 12px;
}
.ime {
    line-height: 20px;
}
.tray time {
    width: 80px;
    margin-left: 4px;
    font-family: "Open Sans", sans-serif;
    font-size: 12px;
    line-height: 19px;
    text-align: center;
}
```

FILE: scene.js
```js
// Grid display: 10 x 10 cells
const grid = document.getElementById("grid");
let lines = "";
for (let i = 0; i <= 10; i++) {
    const t = i / 10;
    lines += `M${433 + 288 * t} ${131 + 161 * t}l-160 287`;
    lines += `M${433 - 160 * t} ${131 + 287 * t}l288 161`;
}
grid.setAttribute("d", lines);

// Areas of the octomap, three units per pixel. Later areas cover earlier ones.
const floorAreas = [
    ["#c4c2c4", [585,65, 725,142, 722,180, 718,250, 690,250, 655,245, 625,290, 605,285, 603,240, 585,222, 565,245, 550,245, 535,275, 505,272, 525,230, 540,195, 530,165]],
    ["#c4c2c4", [580,45, 592,50, 588,62, 576,60]]
];
const areas = [
    ["#c4c2c4", [702,325, 720,320, 716,420, 700,415]],
    ["#c4c2c4", [705,470, 720,470, 716,1110, 690,1110]],
    ["#111111", [250,580, 262,525, 345,465, 330,560, 280,570]],
    ["#c4c2c4", [295,490, 335,470, 325,500, 305,520, 308,560, 290,565, 280,520]],
    ["#05201a", [325,430, 385,380, 390,395, 335,445]],
    ["#111111", [265,610, 190,745, 180,795, 205,785, 270,660]],
    ["#111111", [150,870, 190,890, 270,800, 300,780, 260,880, 170,950, 128,930]],
    ["#c4c2c4", [120,920, 132,925, 128,942, 115,935]],
    ["#c4c2c4", [262,600, 280,604, 276,618, 262,612]],
    ["#009800", [510,40, 535,25, 580,45, 580,75, 530,165, 545,200, 505,245, 510,280, 540,275, 565,240, 590,220, 605,240, 600,280, 628,292, 655,245, 718,255, 716,330, 700,400, 718,430, 712,700, 716,720, 690,720, 660,640, 650,690, 625,780, 640,880, 570,900, 465,900, 440,890, 400,960, 385,940, 350,890, 300,970, 240,1020, 262,940, 265,770, 320,600, 390,420, 400,370, 385,310, 430,240, 480,130]],
    ["#4b9600", [480,125, 500,100, 480,160, 445,250, 420,300, 405,370, 390,360, 385,310, 430,240]],
    ["#009640", [440,240, 500,270, 490,330, 430,330]],
    ["#009060", [300,440, 340,420, 400,375, 460,385, 400,430, 350,450, 320,490, 295,475]],
    ["#00964a", [460,350, 560,365, 620,340, 630,380, 590,440, 600,480, 560,560, 500,640, 490,700, 400,640, 330,650, 370,540, 410,430]],
    ["#00965e", [410,390, 470,400, 540,390, 520,470, 440,560, 390,560, 400,460]],
    ["#0c9600", [540,400, 570,400, 520,540, 500,530]],
    ["#009632", [330,600, 400,620, 520,650, 500,780, 440,900, 400,960, 350,880, 265,960, 265,780]],
    ["#00965a", [300,700, 320,700, 300,790, 270,780]],
    ["#0c9600", [410,770, 470,690, 430,800, 370,850]],
    ["#4b9600", [360,440, 410,395, 400,440, 350,570, 320,660, 290,780, 262,750, 290,600]],
    ["#2b2c00", [335,475, 352,480, 345,530, 330,545, 308,535]],
    ["#0090a0", [385,430, 397,440, 378,480, 365,470]],
    ["#1c9600", [630,440, 690,430, 680,500, 620,640, 600,700, 610,560]],
    ["#c4c2c4", [670,465, 692,475, 682,560, 690,600, 665,595, 675,530]],
    ["#c4c2c4", [540,322, 554,328, 548,346, 536,342]],
    ["#111111", [498,460, 512,464, 508,474, 496,470]],
    ["#2c2400", [665,605, 690,605, 695,700, 718,740, 715,775, 695,835, 625,780, 650,690]],
    ["#e6dcb8", [675,780, 690,778, 690,792, 672,792]],
    ["#e6dcb8", [665,590, 685,592, 690,605, 660,610]],
    ["#009632", [695,480, 706,520, 712,560, 716,720, 695,715, 690,640, 692,560]],
    ["#0088a8", [597,475, 612,482, 575,600, 555,680, 515,680, 540,590]],
    ["#0058b8", [505,670, 540,710, 525,750, 510,790, 490,770, 495,735, 460,745, 475,710, 495,710]],
    ["#1010b0", [490,770, 512,785, 450,900, 460,915, 440,940, 388,1045, 372,1040, 420,950, 412,925, 435,915, 435,890]],
    ["#2a00a0", [380,915, 397,920, 372,975, 384,985, 375,995, 350,1010, 335,1000]],
    ["#1010b0", [395,890, 408,895, 402,912, 388,905]],
    ["#5a00a0", [325,1045, 345,1055, 322,1095, 308,1090]],
    ["#4a00a0", [350,1070, 384,1090, 362,1138, 345,1130, 358,1100]],
    ["#1c0800", [370,870, 385,880, 360,960, 343,950]],
    ["#381700", [250,650, 285,612, 262,700, 275,800, 230,860, 215,900, 180,880, 165,850, 205,800]],
    ["#eed0c4", [155,865, 188,880, 180,900, 150,880]],
    ["#0054ac", [235,850, 264,865, 262,925, 235,990, 180,1092, 108,1052, 110,995, 135,990, 180,920]],
    ["#007cac", [293,788, 308,793, 282,855, 262,845]],
    ["#0090a8", [205,560, 245,545, 280,530, 260,580, 230,640, 180,630]],
    ["#3a9600", [465,880, 575,900, 570,975, 530,1070, 480,1100, 440,1060, 465,960]],
    ["#241200", [545,990, 565,985, 545,1060, 525,1070]],
    ["#111111", [490,1090, 520,1075, 535,1065, 525,1110]],
    ["#c4c2c4", [525,1070, 545,1065, 540,1090, 525,1090]],
    ["#c4c2c4", [470,1090, 505,1095, 500,1112, 470,1100]],
    ["#4e9a00", [640,800, 700,820, 712,840, 705,1148, 600,1150, 620,1000]],
    ["#2c2400", [695,800, 705,880, 712,900, 690,870]],
    ["#00992c", [570,900, 640,890, 630,1000, 625,1140, 570,1175, 550,1150, 565,1010]]
];

function inside(p, x, y) {
    let hit = false;
    for (let i = 0, j = p.length - 2; i < p.length; j = i, i += 2) {
        if ((p[i + 1] > y) !== (p[j + 1] > y) &&
            x < (p[j] - p[i]) * (y - p[i + 1]) / (p[j + 1] - p[i + 1]) + p[i]) {
            hit = !hit;
        }
    }
    return hit;
}

function colorAt(list, x, y) {
    let color = null;
    for (const [fill, points] of list) {
        if (inside(points, x, y)) color = fill;
    }
    return color;
}

function noise(i, j) {
    return Math.abs(Math.sin(i * 12.9 + j * 78.2) * 43758.5) % 1;
}

function isGreen(color) {
    return color !== null && color[1] < "5" && color[3] === "9";
}

function fillCells(target, list, outlined) {
    const a = 29.2 * Math.PI / 180, c = Math.cos(a), s = Math.sin(a), size = 9;
    const paths = {};
    let shine = "";
    for (let i = -20; i < 150; i++) {
        for (let j = -90; j < 130; j++) {
            const u = i * size, v = j * size;
            const x = u * c - v * s, y = u * s + v * c;
            let color = colorAt(list, x, y);
            if (!color) continue;
            // Ragged borders between neighbouring heights
            if (isGreen(color)) {
                const shift = (noise(i, Math.floor(j / 4)) - 0.5) * 70;
                const other = colorAt(list, x - shift * s, y + shift * c);
                if (isGreen(other)) color = other;
            }
            paths[color] = (paths[color] || "") + `M${u} ${v}h${size}v${size}h-${size}z`;
            if (isGreen(color) && noise(i + 7, j) > 0.98) {
                shine += `M${u} ${v}h16v3h-16z`;
            }
        }
    }
    let html = `<g transform="translate(261 305) scale(.3333) rotate(29.2)">`;
    for (const color in paths) {
        const plain = !outlined || color === "#c4c2c4" || color === "#111111";
        html += `<path d="${paths[color]}" fill="${color}" stroke="${plain ? color : "#002000"}" stroke-opacity="${plain ? 1 : 0.25}" stroke-width="1.500"/>`;
    }
    html += `<path d="${shine}" fill="#30ff60" fill-opacity=".6"/></g>`;
    target.innerHTML = html;
}

fillCells(document.getElementById("floor"), floorAreas, false);
fillCells(document.getElementById("voxels"), areas, true);
```
